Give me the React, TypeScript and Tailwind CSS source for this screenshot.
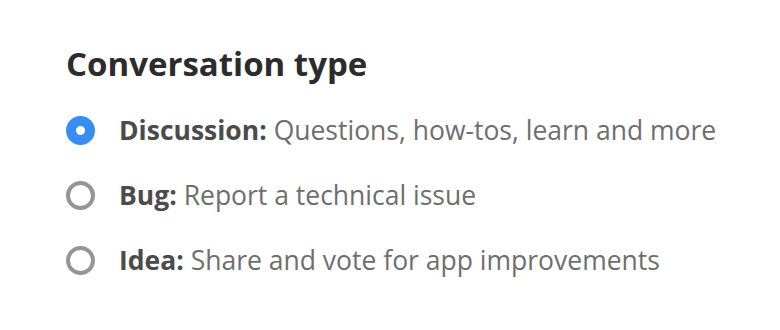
import { useState } from "react";

const options = [
  { id: "discussion", label: "Discussion:", description: "Questions, how-tos, learn and more" },
  { id: "bug", label: "Bug:", description: "Report a technical issue" },
  { id: "idea", label: "Idea:", description: "Share and vote for app improvements" },
];

const App = () => {
  const [selected, setSelected] = useState("discussion");

  return (
    <div className="w-[780px] h-[330px] bg-white font-['Open_Sans',sans-serif]">
      <div className="pl-[66px] pt-[42px]">
        <h2 className="text-[33px] leading-[44px] font-bold text-[#2c2c2c]">
          Conversation type
        </h2>
        <div className="mt-[29px] flex flex-col gap-[35px]">
          {options.map((option) => {
            const isSelected = selected === option.id;
            return (
              <label
                key={option.id}
                className="flex items-center gap-[24px] h-[30px] cursor-pointer"
                onClick={() => setSelected(option.id)}
              >
                <span
                  className={
                    isSelected
                      ? "w-[29px] h-[29px] rounded-full border-[10px] border-[#378ef0] bg-white shrink-0"
                      : "w-[29px] h-[29px] rounded-full border-[4px] border-[#959595] bg-white shrink-0"
                  }
                />
                <span className="text-[26.5px] leading-[30px] text-[#6e6e6e]">
                  <span className="font-bold text-[#4b4b4b]">{option.label}</span>{" "}
                  {option.description}
                </span>
              </label>
            );
          })}
        </div>
      </div>
    </div>
  );
};

export default App;
